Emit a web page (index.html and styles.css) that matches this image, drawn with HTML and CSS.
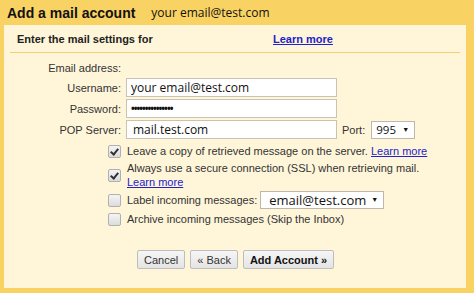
FILE: index.html
```html
<!DOCTYPE html>
<html lang="en">
  <head>
    <meta charset="UTF-8" />
    <link rel="stylesheet" href="styles.css">
    <title>Add a mail account</title>
  </head>
  <body>
    <div class="window">
      <div class="title-bar">
        <h1 class="title">Add a mail account</h1>
        <span class="title-email">your email@test.com</span>
      </div>
      <div class="panel">
        <div class="panel-head">
          <span class="panel-heading">Enter the mail settings for</span>
          <a class="link" href="#">Learn more</a>
        </div>
        <div class="form">
          <div class="row">
            <label class="label">Email address:</label>
            <span></span>
          </div>
          <div class="row">
            <label class="label">Username:</label>
            <div class="field">your email@test.com</div>
          </div>
          <div class="row">
            <label class="label">Password:</label>
            <div class="field dots">•••••••••••••••</div>
          </div>
          <div class="row">
            <label class="label">POP Server:</label>
            <div class="server-line">
              <div class="field">mail.test.com</div>
              <span class="port-label">Port:</span>
              <div class="select port">995 <span class="arrow">▼</span></div>
            </div>
          </div>
        </div>
        <div class="options">
          <div class="option">
            <span class="box checked"></span>
            <span>Leave a copy of retrieved message on the server. <a class="link" href="#">Learn more</a></span>
          </div>
          <div class="option two-line">
            <span class="box checked"></span>
            <span>Always use a secure connection (SSL) when retrieving mail.<br /><a class="link" href="#">Learn more</a></span>
          </div>
          <div class="option">
            <span class="box"></span>
            <span>Label incoming messages:</span>
            <div class="select label-select">email@test.com <span class="arrow">▼</span></div>
          </div>
          <div class="option">
            <span class="box"></span>
            <span>Archive incoming messages (Skip the Inbox)</span>
          </div>
        </div>
        <div class="buttons">
          <button class="btn">Cancel</button>
          <button class="btn">« Back</button>
          <button class="btn primary">Add Account »</button>
        </div>
      </div>
    </div>
  </body>
</html>
```

FILE: styles.css
```css
body {
  margin: 0;
  background-color: #f9d264;
  font-family: "Liberation Sans", Arial, sans-serif;
  font-size: 11px;
  color: #222;
}

.window {
  width: 474px;
  height: 293px;
  padding: 0 8px 5px 4px;
  box-sizing: border-box;
  display: flex;
  flex-direction: column;
}

.title-bar {
  height: 25px;
  display: flex;
  align-items: center;
  padding-left: 3px;
}

.title {
  margin: 0;
  font-size: 14px;
  font-weight: bold;
  color: #111;
}

.title-email {
  margin-left: 16px;
  font-family: "Open Sans", sans-serif;
  font-size: 12px;
  color: #111;
}

.panel {
  flex: 1;
  background-color: #fff6da;
  padding: 0 6px;
}

.panel-head {
  display: flex;
  align-items: center;
  height: 27px;
  padding: 0 0 0 7px;
  border-bottom: 1px solid #f3cf73;
}

.panel-heading {
  font-weight: bold;
  width: 256px;
}

.link {
  color: #2222cc;
  text-decoration: underline;
}

.panel-head .link {
  font-weight: bold;
}

.form {
  display: grid;
  grid-template-columns: 111px auto;
  column-gap: 5px;
  row-gap: 2px;
  margin-top: 9px;
  align-items: center;
}

.label {
  text-align: right;
  color: #333;
}

.row {
  display: contents;
}

.row:first-child .label {
  height: 14px;
}

.field {
  width: 202px;
  height: 17px;
  line-height: 17px;
  border: 1px solid #c8c3b3;
  background-color: #fff;
  padding: 0 3px 0 4px;
  font-family: "Open Sans", sans-serif;
  font-size: 12px;
  color: #111;
}

.dots {
  font-size: 10px;
  letter-spacing: -1px;
  font-weight: bold;
}

.server-line {
  display: flex;
  align-items: center;
}

.server-line .field {
  padding-left: 6px;
  width: 200px;
}

.port-label {
  margin-left: 5px;
  color: #333;
}

.select {
  border: 1px solid #bdb8a8;
  background-color: #fff;
  height: 16px;
  line-height: 16px;
  font-family: "Open Sans", sans-serif;
  font-size: 11.5px;
  color: #111;
  display: flex;
  align-items: center;
  justify-content: space-between;
  padding: 0 5px 0 4px;
}

.port {
  margin-left: 6px;
  width: 33px;
}

.arrow {
  font-size: 7px;
}

.options {
  margin-top: 4px;
  padding-left: 98px;
  display: flex;
  flex-direction: column;
  gap: 2px;
  color: #333;
}

.option {
  display: flex;
  align-items: center;
  min-height: 16px;
}

.option.two-line {
  line-height: 14px;
}

.box {
  width: 11px;
  height: 11px;
  border: 1px solid #b0b0b0;
  border-radius: 2px;
  background: linear-gradient(#f4f4f4, #dcdcdc);
  margin-right: 6px;
  flex-shrink: 0;
  position: relative;
}

.checked::after {
  content: "";
  position: absolute;
  left: 3px;
  top: 1px;
  width: 3px;
  height: 6px;
  border: solid #333;
  border-width: 0 2px 2px 0;
  transform: rotate(40deg);
}

.label-select {
  margin-left: 3px;
  width: 109px;
  height: 16px;
  font-size: 13px;
  padding-left: 8px;
}

.buttons {
  display: flex;
  gap: 5px;
  margin-top: 23px;
  padding-left: 127px;
}

.btn {
  font-family: "Liberation Sans", Arial, sans-serif;
  font-size: 11px;
  color: #333;
  background: linear-gradient(#f6f6f6, #e4e4e4);
  border: 1px solid #bdbdbd;
  border-radius: 2px;
  height: 19px;
  padding: 0 6px;
}

.btn.primary {
  font-weight: bold;
  color: #111;
}
```
